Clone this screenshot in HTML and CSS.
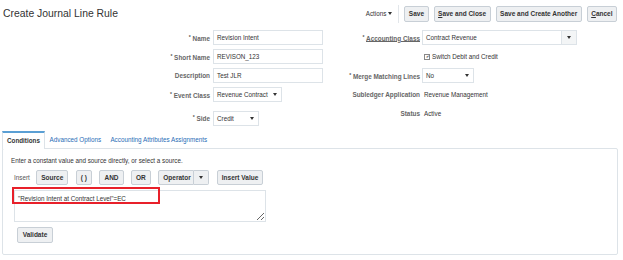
FILE: index.html
```html
<!DOCTYPE html>
<html lang="en">
<head>
    <meta charset="UTF-8">
    <meta name="viewport" content="width=device-width, initial-scale=1.0">
    <title>Create Journal Line Rule</title>
    <link rel="stylesheet" href="styles.css">
</head>
<body>
    <div class="page">
        <header class="page-header">
            <h1>Create Journal Line Rule</h1>
            <div class="toolbar">
                <span class="menu">Actions <span class="caret"></span></span>
                <span class="sep"></span>
                <button class="btn">Save</button>
                <button class="btn"><u>S</u>ave and Close</button>
                <button class="btn">Save and Create Another</button>
                <button class="btn"><u>C</u>ancel</button>
            </div>
        </header>

        <div class="form">
            <div class="form-col left">
                <div class="field">
                    <label class="lbl"><span class="req">*</span> Name</label>
                    <div class="input">Revision Intent</div>
                </div>
                <div class="field">
                    <label class="lbl"><span class="req">*</span> Short Name</label>
                    <div class="input">REVISON_123</div>
                </div>
                <div class="field">
                    <label class="lbl">Description</label>
                    <div class="input">Test JLR</div>
                </div>
                <div class="field">
                    <label class="lbl"><span class="req">*</span> Event Class</label>
                    <div class="select event">Revenue Contract <span class="caret"></span></div>
                </div>
                <div class="field spaced">
                    <label class="lbl"><span class="req">*</span> Side</label>
                    <div class="select side">Credit <span class="caret"></span></div>
                </div>
            </div>

            <div class="form-col right">
                <div class="field">
                    <label class="lbl"><span class="req">*</span> <span class="link">Accounting Class</span></label>
                    <div class="combo">
                        <span class="combo-text">Contract Revenue</span>
                        <span class="combo-btn"><span class="caret"></span></span>
                    </div>
                </div>
                <div class="field">
                    <label class="lbl"></label>
                    <span class="check"><span class="box">&#10004;</span> Switch Debit and Credit</span>
                </div>
                <div class="field">
                    <label class="lbl"><span class="req">*</span> Merge Matching Lines</label>
                    <div class="select merge">No <span class="caret"></span></div>
                </div>
                <div class="field">
                    <label class="lbl">Subledger Application</label>
                    <span class="value">Revenue Management</span>
                </div>
                <div class="field">
                    <label class="lbl">Status</label>
                    <span class="value">Active</span>
                </div>
            </div>
        </div>

        <div class="tabs">
            <span class="tab active">Conditions</span>
            <span class="tab">Advanced Options</span>
            <span class="tab">Accounting Attributes Assignments</span>
        </div>

        <div class="panel">
            <p class="hint">Enter a constant value and source directly, or select a source.</p>
            <div class="insert-row">
                <span class="insert-label">Insert</span>
                <button class="btn">Source</button>
                <button class="btn">( )</button>
                <button class="btn">AND</button>
                <button class="btn">OR</button>
                <span class="split">
                    <button class="btn split-main">Operator</button><button class="btn split-arrow"><span class="caret"></span></button>
                </span>
                <button class="btn">Insert Value</button>
            </div>
            <div class="expr">
                <textarea class="expr-text">"Revision Intent at Contract Level"=EC</textarea>
                <span class="highlight"></span>
            </div>
            <button class="btn validate">Validate</button>
        </div>
    </div>
</body>
</html>
```

FILE: styles.css
```css
body {
    margin: 0;
    background: #fff;
    font-family: "Liberation Sans", Arial, sans-serif;
    color: #333;
}

.page {
    width: 623px;
}

/* header with title and toolbar */
.page-header {
    display: flex;
    align-items: center;
    justify-content: space-between;
    height: 17px;
    padding: 5px 6px 0 3px;
}

h1 {
    margin: 0;
    font-size: 10.4px;
    font-weight: normal;
    color: #333;
}

.toolbar {
    display: flex;
    align-items: center;
}

.menu {
    font-size: 6.3px;
    color: #333;
    display: flex;
    align-items: center;
    gap: 2px;
}

.caret {
    display: inline-block;
    width: 0;
    height: 0;
    border-left: 2px solid transparent;
    border-right: 2px solid transparent;
    border-top: 3px solid #333;
}

.sep {
    width: 1px;
    height: 18px;
    background: #e2e6ea;
    margin: 0 5px 0 6px;
}

.btn {
    font-family: "Liberation Sans", Arial, sans-serif;
    font-size: 6.5px;
    font-weight: bold;
    color: #333;
    background: #eef0f2;
    border: 1px solid #c8cfd6;
    border-radius: 2px;
    height: 16px;
    padding: 0 3.5px;
    margin: 0;
    line-height: 14px;
}

.toolbar .btn {
    margin-left: 5px;
}

.toolbar .btn:first-of-type {
    margin-left: 0;
}

/* form area */
.form {
    display: flex;
    margin-top: 8px;
}

.field {
    display: flex;
    align-items: center;
    height: 15px;
    margin-bottom: 4px;
}

.field.spaced {
    margin-top: 8.7px;
}

.lbl {
    font-size: 6.4px;
    font-weight: bold;
    color: #666;
    text-align: right;
    flex: none;
}

.req {
    font-size: 5px;
    vertical-align: 1.5px;
    color: #555;
}

.left {
    width: 323px;
}

.left .lbl {
    width: 210px;
    margin-right: 3px;
}

.right .lbl {
    width: 97px;
    margin-right: 2px;
}

.link {
    text-decoration: underline;
}

.input,
.select,
.combo {
    box-sizing: border-box;
    height: 15px;
    border: 1px solid #dde3e8;
    background: #fff;
    font-size: 6.3px;
    color: #333;
    display: flex;
    align-items: center;
    padding: 0 3px;
}

.input {
    width: 110px;
}

.select {
    justify-content: space-between;
    padding-right: 4px;
}

.select.event { width: 69px; }
.select.side { width: 46px; }
.select.merge { width: 52px; }

.combo {
    width: 155px;
    padding: 0 0 0 3px;
    justify-content: space-between;
}

.combo-btn {
    width: 14px;
    height: 13px;
    border-left: 1px solid #dde3e8;
    background: #f3f5f6;
    display: flex;
    align-items: center;
    justify-content: center;
}

.check {
    display: flex;
    align-items: center;
    gap: 2px;
    font-size: 6.3px;
    margin-left: 2px;
}

.box {
    width: 4px;
    height: 4px;
    border: 1px solid #888;
    font-size: 4px;
    line-height: 4px;
    text-align: center;
    color: #333;
}

.value {
    font-size: 6.3px;
    color: #333;
    padding-left: 2px;
}

/* tabs */
.tabs {
    display: flex;
    margin: 1px 0 0 2px;
    height: 17px;
    position: relative;
    z-index: 1;
}

.tab {
    font-size: 6.3px;
    color: #1f6db6;
    padding: 0 4.7px;
    display: flex;
    align-items: center;
}

.tab.active {
    color: #333;
    font-weight: bold;
    padding: 0 4px;
    background: #fff;
    border: 1px solid #dde3e8;
    border-top: 2px solid #5a9fd4;
    border-bottom: none;
    box-sizing: border-box;
    margin-bottom: -1px;
    height: 18px;
}

.panel {
    margin: 0 5px 0 2px;
    border: 1px solid #dde3e8;
    border-radius: 2px;
    padding: 8px 8px 0 8px;
    height: 97px;
}

.hint {
    margin: 0;
    font-size: 6.3px;
    line-height: 8px;
    color: #333;
}

.insert-row {
    display: flex;
    align-items: center;
    margin: 5px 0 0 3px;
    gap: 7.5px;
}

.insert-row .btn {
    height: 15px;
    padding: 0 4px;
}

.insert-label {
    font-size: 6.3px;
    color: #555;
    margin-right: -1px;
}

.split {
    display: flex;
}

.insert-row .split-main {
    border-radius: 2px 0 0 2px;
    width: 36px;
}

.insert-row .split-arrow {
    border-left: none;
    border-radius: 0 2px 2px 0;
    width: 15px;
    padding: 0;
    display: flex;
    align-items: center;
    justify-content: center;
}

.expr {
    position: relative;
    margin: 5px 0 0 3px;
}

.expr-text {
    display: block;
    box-sizing: border-box;
    width: 252px;
    height: 32px;
    margin: 0;
    border: 1px solid #dde3e8;
    padding: 4px 3px;
    font-family: "Liberation Sans", Arial, sans-serif;
    font-size: 6.3px;
    color: #333;
    resize: both;
}

/* red annotation box */
.highlight {
    position: absolute;
    left: -2px;
    top: -2.3px;
    width: 148px;
    height: 16.6px;
    border: 2px solid #e8202a;
    box-sizing: border-box;
}

.panel .validate {
    height: 16px;
    margin: 5px 0 0 5.7px;
    padding: 0 5px;
}
```
